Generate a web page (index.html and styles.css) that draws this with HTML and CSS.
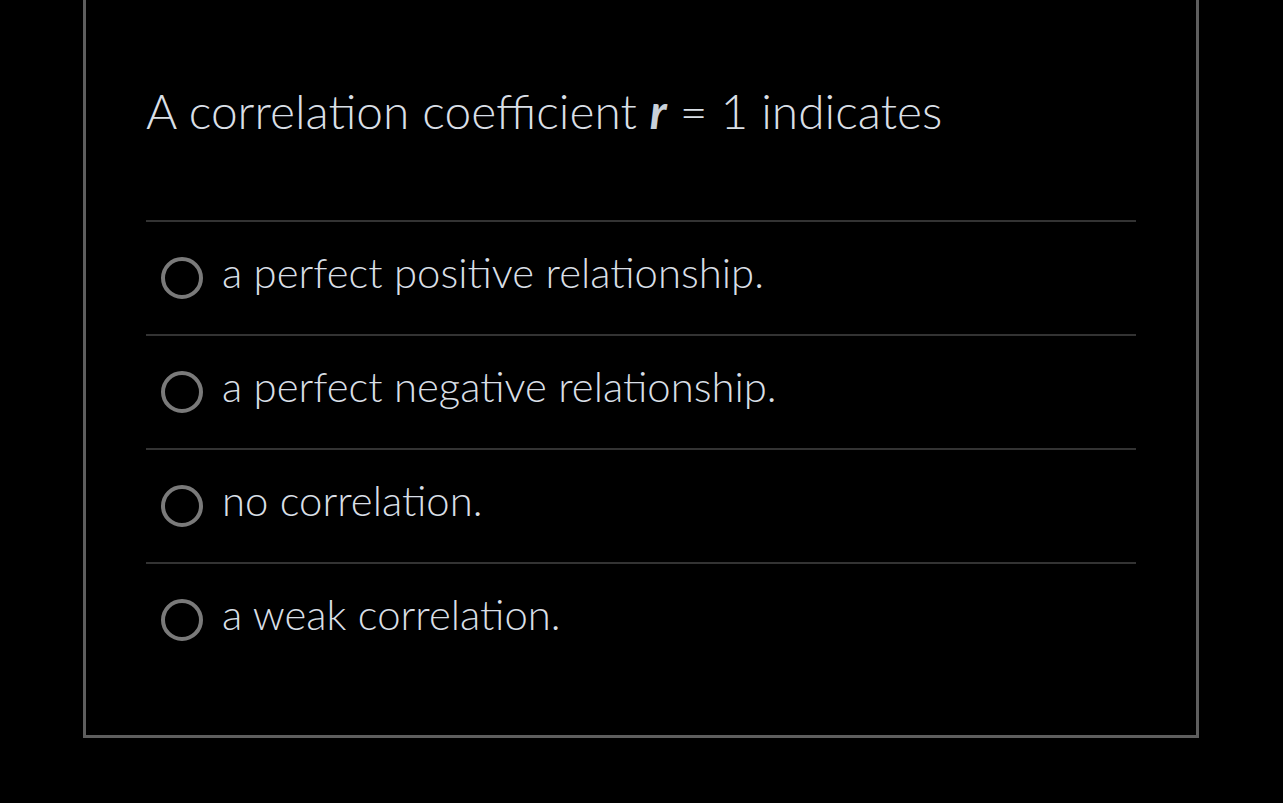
FILE: index.html
```html
<!DOCTYPE html>
<html lang="en">
<head>
<meta charset="utf-8">
<title>Question</title>
<link rel="stylesheet" href="styles.css">
</head>
<body>
<div class="card">
  <h1 class="question">A correlation coefficient <b class="var">r</b> = 1 indicates</h1>
  <ul class="options">
    <li class="option"><label><input type="radio" name="q"><span>a perfect positive relationship.</span></label></li>
    <li class="option"><label><input type="radio" name="q"><span>a perfect negative relationship.</span></label></li>
    <li class="option"><label><input type="radio" name="q"><span>no correlation.</span></label></li>
    <li class="option"><label><input type="radio" name="q"><span>a weak correlation.</span></label></li>
  </ul>
</div>
</body>
</html>
```
FILE: styles.css
```css
html, body {
  margin: 0;
  padding: 0;
  background: #000;
}
body {
  font-family: "Lato Light", Lato, "Open Sans", sans-serif;
  font-weight: 300;
  color: #d9dfe6;
}
.card {
  margin-left: 83px;
  width: 1116px;
  box-sizing: border-box;
  border: 3px solid #5e5e5e;
  border-top: none;
  padding: 82px 60px 59px;
}
.question {
  margin: 0 0 80px;
  font-size: 47.85px;
  line-height: 58px;
  font-weight: 300;
  color: #d9dfe6;
}
.var {
  font-family: Lato, sans-serif;
  font-style: italic;
  font-weight: 700;
  color: #c9d1d9;
}
.options {
  list-style: none;
  margin: 0;
  padding: 0;
}
.option {
  border-top: 2px solid #333;
  height: 112px;
  display: flex;
  align-items: center;
  padding-left: 15px;
}
.option label {
  display: flex;
  align-items: center;
  gap: 19px;
  font-size: 41.85px;
}
.option label span {
  margin-bottom: 12px;
}
.option input {
  appearance: none;
  -webkit-appearance: none;
  margin: 0;
  width: 42px;
  height: 42px;
  box-sizing: border-box;
  border: 4px solid #7a7a7a;
  border-radius: 50%;
  flex: none;
}
```
